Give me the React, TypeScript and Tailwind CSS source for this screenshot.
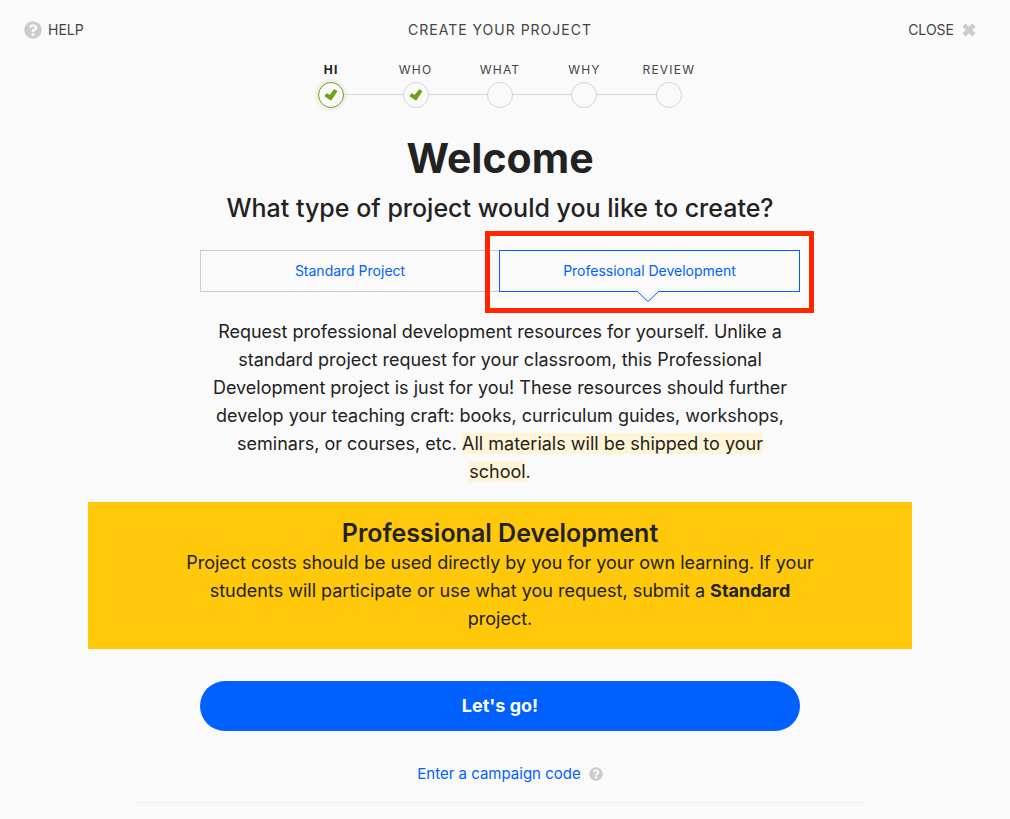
import clsx from "clsx";
import { FC } from "react";
import { FaQuestionCircle } from "react-icons/fa";

type Step = { label: string; done?: boolean; current?: boolean };

const STEPS: Step[] = [
  { label: "HI", done: true, current: true },
  { label: "WHO", done: true },
  { label: "WHAT" },
  { label: "WHY" },
  { label: "REVIEW" },
];

const CheckIcon: FC = () => (
  <svg viewBox="0 0 14 12" className="h-3 w-3.5 fill-[#6aa314]">
    <path d="M9.9.5q.5-.6 1.1-.1l1.9 1.3q.6.5.2 1.1L7.6 10.9q-.7.9-1.6.2L.9 7.6q-.6-.5-.1-1.1l1.4-1.8q.5-.6 1.1-.1l2.3 1.5z" />
  </svg>
);

const CrossIcon: FC = () => (
  <svg viewBox="0 0 14 14" className="size-3.5 fill-[#cccccc]">
    <path d="M4.2.9 7 3.7 9.8.9q.5-.4 1 0l2.3 2.3q.4.5 0 1L10.3 7l2.8 2.8q.4.5 0 1l-2.3 2.3q-.5.4-1 0L7 10.3l-2.8 2.8q-.5.4-1 0L.9 10.8q-.4-.5 0-1L3.7 7 .9 4.2q-.4-.5 0-1L3.2.9q.5-.4 1 0z" />
  </svg>
);

const Progress: FC = () => (
  <ol className="mx-auto mt-5 flex w-full max-w-[422px]">
    {STEPS.map(({ label, done, current }, i) => (
      <li key={label} className="flex flex-1 flex-col items-center">
        <span
          className={clsx(
            "text-xs leading-5 tracking-widest",
            current ? "font-bold text-[#222222]" : "text-[#444444]"
          )}
        >
          {label}
        </span>
        <div className="mt-0.5 flex w-full items-center">
          <span
            className={clsx("mb-0.5 h-px flex-1", i > 0 && "bg-[#d4d4d4]")}
          />
          <span
            className={clsx(
              "flex size-[26px] items-center justify-center rounded-full border",
              current
                ? "border-[#6aa314] shadow-[0_0_0_3px_#f0f0f0]"
                : "border-[#d4d4d4]"
            )}
          >
            {done && <CheckIcon />}
          </span>
          <span
            className={clsx(
              "mb-0.5 h-px flex-1",
              i < STEPS.length - 1 && "bg-[#d4d4d4]"
            )}
          />
        </div>
      </li>
    ))}
  </ol>
);

const ProjectTypes: FC = () => (
  <div className="mt-[26px] flex h-[42px] text-sm">
    <button
      type="button"
      className="flex-1 border border-r-0 border-[#cccccc] text-[#0061ff]"
    >
      Standard Project
    </button>
    <button
      type="button"
      className="relative w-[301px] border border-[#0061ff] text-[#0061ff]"
    >
      Professional Development
      <svg
        viewBox="0 0 22 12"
        className="absolute top-full left-[148px] h-3 w-[22px] -translate-x-1/2"
      >
        <path d="M0 0h22v1L11 11 0 1z" fill="#fafafa" />
        <path d="M0 0 11 10.5 22 0" fill="none" stroke="#0061ff" />
      </svg>
      <span className="pointer-events-none absolute -inset-x-[15px] -top-5 -bottom-[22px] border-5 border-[#ff2600]" />
    </button>
  </div>
);

const App: FC = () => (
  <div className="min-h-screen bg-[#fafafa] pr-2.5 pb-4 font-[Inter,sans-serif] text-[#222222]">
    <header className="grid grid-cols-3 items-center px-6 pt-5 text-sm leading-5 text-[#444444]">
      <a href="#help" className="flex items-center gap-1.5">
        <FaQuestionCircle className="size-[18px] text-[#cccccc]" />
        HELP
      </a>
      <h1 className="text-center tracking-[1px] whitespace-nowrap">
        CREATE YOUR PROJECT
      </h1>
      <button
        type="button"
        className="flex items-center gap-2 justify-self-end"
      >
        CLOSE
        <CrossIcon />
      </button>
    </header>

    <Progress />

    <main className="text-center">
      <div className="mx-auto max-w-[600px]">
        <h2 className="mt-6 text-[41px] leading-[52px] font-bold">Welcome</h2>
        <h3 className="mt-2 text-[25px] leading-8 font-medium">
          What type of project would you like to create?
        </h3>
        <ProjectTypes />
        <p className="mt-[26px] px-2 text-lg leading-7">
          Request professional development resources for yourself. Unlike a
          standard project request for your classroom, this Professional
          Development project is just for you! These resources should further
          develop your teaching craft: books, curriculum guides, workshops,
          seminars, or courses, etc.{" "}
          <mark className="bg-[#fff4d6] text-inherit">
            All materials will be shipped to your school
          </mark>
          .
        </p>
      </div>

      <section className="mx-auto mt-4 max-w-[824px] bg-[#ffc80b] px-[90px] pt-[15px] pb-4">
        <h4 className="text-[25px] leading-8 font-semibold">
          Professional Development
        </h4>
        <p className="text-lg leading-7">
          Project costs should be used directly by you for your own learning. If
          your students will participate or use what you request, submit a{" "}
          <b>Standard</b> project.
        </p>
      </section>

      <div className="mx-auto mt-8 max-w-[600px]">
        <button
          type="button"
          className="h-[50px] w-full rounded-full bg-[#0061ff] text-lg font-bold text-white"
        >
          Let's go!
        </button>
      </div>

      <div className="mx-auto mt-[31px] flex max-w-[728px] items-center justify-center gap-2 border-b border-[#eeeeee] pb-4 pl-5">
        <a href="#campaign" className="text-[15px] leading-6 text-[#0061ff]">
          Enter a campaign code
        </a>
        <FaQuestionCircle className="size-3.5 text-[#cccccc]" />
      </div>
    </main>
  </div>
);

export default App;
